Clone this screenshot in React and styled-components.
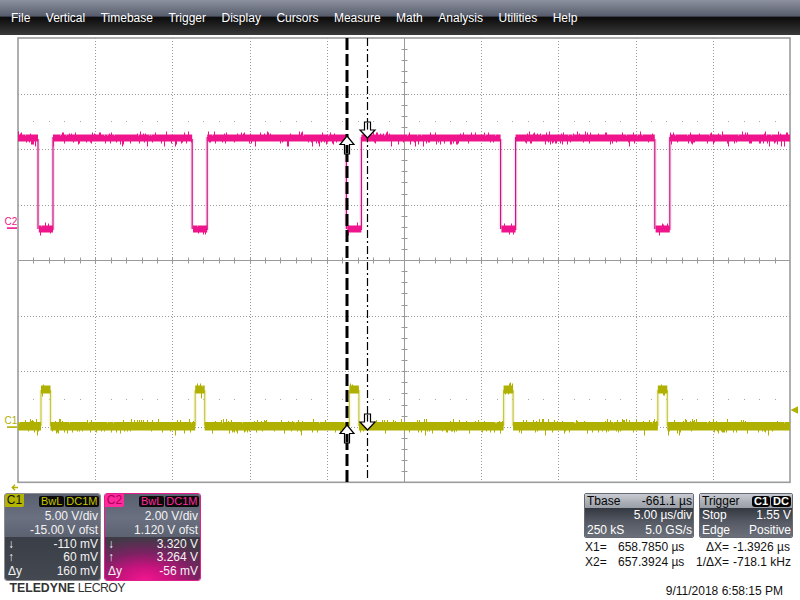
import React from "react";
import styled, { createGlobalStyle } from "styled-components";

const GlobalStyle = createGlobalStyle`
  html, body { margin: 0; padding: 0; background: #fff; }
  body { font-family: "Liberation Sans", Arial, sans-serif; }
  #root { width: 800px; height: 600px; overflow: hidden; }
`;

const PINK = "#f0148c";
const OLIVE = "#b0b000";

const Screen = styled.div`
  width: 800px;
  height: 600px;
  display: flex;
  flex-direction: column;
  background: #fff;
  overflow: hidden;
`;

const MenuBar = styled.nav`
  height: 35px;
  flex: none;
  box-sizing: border-box;
  display: flex;
  align-items: center;
  gap: 15.5px;
  padding: 1px 0 0 11px;
  background: linear-gradient(
    180deg,
    #8d919f 0%,
    #6a6f7e 30%,
    #575c6c 46%,
    #0c0c0c 49%,
    #161616 62%,
    #3a3a3a 100%
  );
`;

const MenuItem = styled.span`
  color: #fff;
  font-size: 12px;
  line-height: 14px;
`;

const Display = styled.svg`
  display: block;
  flex: none;
  width: 800px;
  height: 456px;
  font-family: "Liberation Sans", Arial, sans-serif;
`;

const Bottom = styled.div`
  flex: 1;
  display: flex;
  justify-content: space-between;
  padding: 2px 7px 0 4px;
`;

const LeftCol = styled.div`
  display: flex;
  flex-direction: column;
`;

const PanelRow = styled.div`
  display: flex;
  gap: ${(p) => p.$gap}px;
`;

const ChanPanel = styled.div`
  width: 97px;
  height: 88px;
  box-sizing: border-box;
  border: 1px solid ${(p) => p.$border};
  border-radius: 3px;
  overflow: hidden;
  display: flex;
  flex-direction: column;
  color: #f3f3f3;
  font-size: 12px;
`;

const PanelTop = styled.div`
  flex: none;
  background: linear-gradient(180deg, #596070 0%, #6a7080 55%, #5d6271 100%);
`;

const PanelHead = styled.div`
  height: 15px;
  display: flex;
  justify-content: space-between;
  align-items: flex-start;
`;

const ChanTag = styled.span`
  width: 19px;
  height: 13px;
  line-height: 13px;
  text-align: center;
  font-size: 12px;
  background: ${(p) => p.$bg};
  color: ${(p) => p.$fg};
  border-radius: 2px 0 2px 0;
`;

const Badges = styled.span`
  display: flex;
  gap: 1px;
  margin-top: 2px;
  margin-right: 1px;
`;

const Badge = styled.span`
  height: 11px;
  line-height: 11px;
  font-size: 11px;
  padding: 0 1.5px;
  background: #0b0b0b;
  color: ${(p) => p.$fg};
  border-radius: 2px;
`;

const ValueRow = styled.div`
  height: ${(p) => p.$h}px;
  line-height: ${(p) => p.$h}px;
  display: flex;
  justify-content: ${(p) => (p.$split ? "space-between" : "flex-end")};
  padding: 0 2px 0 3px;
  white-space: pre;
`;

const PanelLower = styled.div`
  flex: 1;
  padding-top: 1px;
  background: ${(p) => p.$bg};
`;

const Logo = styled.div`
  padding-left: 6px;
  height: 16px;
  line-height: 14px;
  font-size: 13.5px;
  color: #333;
  white-space: nowrap;
  transform: scaleX(0.91);
  transform-origin: left center;
`;

const LogoBold = styled.b`
  font-weight: 700;
`;

const LogoLight = styled.span`
  font-weight: 400;
  letter-spacing: -0.6px;
  margin-left: 3px;
`;

const RightCol = styled.div`
  width: 209px;
  display: flex;
  flex-direction: column;
`;

const InfoPanel = styled.div`
  width: ${(p) => p.$w}px;
  height: 45px;
  box-sizing: border-box;
  border: 1px solid #666a72;
  border-radius: 2px;
  overflow: hidden;
  display: flex;
  flex-direction: column;
  font-size: 12px;
`;

const InfoHead = styled.div`
  height: 14px;
  line-height: 14px;
  flex: none;
  display: flex;
  justify-content: space-between;
  align-items: center;
  padding: 0 1px 0 2px;
  color: #050505;
  background: linear-gradient(180deg, #c9ccd2 0%, #a9adb5 60%, #9a9ea6 100%);
`;

const InfoBody = styled.div`
  flex: 1;
  background: linear-gradient(180deg, #33373f 0%, #545862 45%, #6c707a 100%);
`;

const InfoRow = styled.div`
  height: 14.5px;
  line-height: 14.5px;
  display: flex;
  justify-content: ${(p) => (p.$split ? "space-between" : "flex-end")};
  padding: 0 1px 0 2px;
  color: #fff;
  white-space: pre;
`;

const TrigBadges = styled.span`
  display: flex;
  gap: 1px;
`;

const TrigBadge = styled.span`
  height: 11px;
  line-height: 11px;
  font-size: 11px;
  font-weight: 700;
  padding: 0 2px;
  color: #fff;
  background: #050505;
  border-radius: 3px;
`;

const Readouts = styled.div`
  margin-top: 2px;
  display: grid;
  grid-template-columns: 34px 77px 36px 1fr;
  font-size: 12px;
  line-height: 15px;
  color: #111;
  white-space: pre;
`;

const RLabel = styled.span`
  text-align: ${(p) => (p.$right ? "right" : "left")};
  padding: ${(p) => (p.$right ? "0 2px 0 0" : "0 0 0 1px")};
`;

const RValue = styled.span`
  padding-left: ${(p) => p.$pl || 0}px;
`;

const Stamp = styled.div`
  margin-top: 14px;
  padding-right: 10px;
  text-align: right;
  font-size: 12px;
  line-height: 15px;
  color: #111;
`;

/* ---------- drawing helpers ---------- */

const GX0 = 18;
const GX1 = 790;
const GY0 = 38;
const GY1 = 482.3;
const DX = (GX1 - GX0) / 10;
const DY = (GY1 - GY0) / 8;
const CX = GX0 + DX * 5;
const CY = GY0 + DY * 4;

const mkRand = (seed) => {
  let s = seed;
  return () => {
    s = (s * 16807) % 2147483647;
    return (s - 1) / 2147483646;
  };
};

function band(x1, x2, yt, yb, rand) {
  let d = `M${x1} ${yt}H${x2}V${yb}H${x1}Z`;
  let w = "";
  for (let x = Math.ceil(x1); x < x2 - 1; x += 1) {
    const r = rand();
    if (r < 0.14) {
      const l = 1 + Math.floor(rand() * 2.5);
      d += `M${x} ${yt}h1v${-l}h-1z`;
    } else if (r < 0.3) {
      const l = 1 + Math.floor(rand() * 2.5);
      d += `M${x} ${yb}h1v${l}h-1z`;
    } else if (r < 0.315) {
      d += `M${x} ${yb}h1v5h-1z`;
    } else if (r < 0.35) {
      w += `M${x} ${yt}h1v1.2h-1z`;
    }
  }
  return { d, w };
}

function buildC2() {
  const rand = mkRand(12345);
  const starts = [0, 1, 2, 3, 4].map((k) => 38 + k * 154.2);
  const W = 15;
  let d = "";
  let w = "";
  const add = (b) => {
    d += b.d;
    w += b.w;
  };
  let prev = GX0;
  starts.forEach((s) => {
    add(band(prev, s, 134.5, 141.5, rand));
    add(band(s + 0.8, s + W, 225.5, 232.5, rand));
    prev = s + W;
  });
  add(band(prev, GX1, 134.5, 141.5, rand));
  const edges = [];
  starts.forEach((s) => {
    edges.push({ x: s, y1: 139, y2: 229 });
    edges.push({ x: s + W, y1: 137, y2: 230 });
  });
  return { d, w, edges };
}

function buildC1() {
  const rand = mkRand(98765);
  const starts = [0, 1, 2, 3, 4].map((k) => 41 + k * 154.2);
  const W = 9.5;
  let d = "";
  let w = "";
  const add = (b) => {
    d += b.d;
    w += b.w;
  };
  let prev = GX0;
  starts.forEach((s) => {
    add(band(prev, s, 422, 430.5, rand));
    add(band(s, s + W, 385.5, 393.5, rand));
    prev = s + W;
  });
  add(band(prev, GX1, 422, 430.5, rand));
  const edges = [];
  starts.forEach((s) => {
    edges.push({ x: s, y1: 390, y2: 426 });
    edges.push({ x: s + W, y1: 390, y2: 426 });
  });
  return { d, w, edges };
}

const C2 = buildC2();
const C1 = buildC1();

function Grid() {
  const vx = [];
  for (let k = 1; k < 10; k++) if (k !== 5) vx.push(Math.round(GX0 + k * DX) + 0.5);
  const hy = [];
  for (let k = 1; k < 8; k++) if (k !== 4) hy.push(Math.round(GY0 + k * DY) + 0.5);
  const cx = Math.round(CX) + 0.5;
  const cy = Math.round(CY) + 0.5;
  let ticks = "";
  for (let i = 1; i < 50; i++) {
    const x = Math.round(GX0 + (i * DX) / 5) + 0.5;
    ticks += `M${x} ${cy - 3}V${cy + 3}`;
  }
  for (let i = 1; i < 40; i++) {
    const y = Math.round(GY0 + (i * DY) / 5) + 0.5;
    ticks += `M${cx - 3} ${y}H${cx + 3}`;
  }
  let dots = "";
  [GY0 + 1.5 * DY, GY0 + 6.5 * DY].forEach((y) => {
    const yy = Math.round(y);
    for (let i = 1; i < 50; i++) {
      if (i % 5 === 0) continue;
      const x = Math.round(GX0 + (i * DX) / 5);
      dots += `M${x} ${yy}h1v1h-1z`;
    }
  });
  return (
    <g>
      {vx.map((x) => (
        <line key={`v${x}`} x1={x} y1={GY0} x2={x} y2={GY1} stroke="#9a9a9a" strokeWidth="1" strokeDasharray="1 2" />
      ))}
      {hy.map((y) => (
        <line key={`h${y}`} x1={GX0} y1={y} x2={GX1} y2={y} stroke="#9a9a9a" strokeWidth="1" strokeDasharray="1 2" />
      ))}
      <path d={dots} fill="#a8a8a8" />
      <line x1={cx} y1={GY0} x2={cx} y2={GY1} stroke="#9a9a9a" strokeWidth="1" />
      <line x1={GX0} y1={cy} x2={GX1} y2={cy} stroke="#9a9a9a" strokeWidth="1" />
      <path d={ticks} stroke="#9a9a9a" strokeWidth="1" fill="none" />
      <rect x={GX0} y={GY0} width={GX1 - GX0} height={GY1 - GY0} fill="none" stroke="#9c9c9c" strokeWidth="1.6" />
    </g>
  );
}

function Trace({ data, color, edge, glow }) {
  return (
    <g>
      {data.edges.map((e, i) => (
        <line key={`g${i}`} x1={e.x} y1={e.y1} x2={e.x} y2={e.y2} stroke={glow} strokeWidth="4" opacity="0.3" />
      ))}
      {data.edges.map((e, i) => (
        <line key={`e${i}`} x1={e.x} y1={e.y1} x2={e.x} y2={e.y2} stroke={edge} strokeWidth="1.2" />
      ))}
      <path d={data.d} fill={color} />
      <path d={data.w} fill="#fff" opacity="0.5" />
    </g>
  );
}

function UpArrow({ x, y, line }) {
  const p = `${x},${y} ${x + 7},${y + 8.5} ${x + 2.5},${y + 8.5} ${x + 2.5},${y + 18} ${x - 2.5},${y + 18} ${x - 2.5},${y + 8.5} ${x - 7},${y + 8.5}`;
  return (
    <g>
      <polygon points={p} fill="#fff" stroke="#000" strokeWidth="1.2" strokeLinejoin="miter" />
      <rect x={x - line / 2} y={y + 9} width={line} height={8.4} fill="#000" />
    </g>
  );
}

function DownArrow({ x, y, line }) {
  const p = `${x},${y} ${x + 7.5},${y - 8} ${x + 3},${y - 8} ${x + 3},${y - 16} ${x - 3},${y - 16} ${x - 3},${y - 8} ${x - 7.5},${y - 8}`;
  return (
    <g>
      <polygon points={p} fill="#fff" stroke="#000" strokeWidth="1.2" />
      <rect x={x - line / 2} y={y - 15.4} width={line} height={7} fill="#000" />
    </g>
  );
}

function Scope() {
  const x1 = 347;
  const x2 = 367.5;
  return (
    <Display viewBox="0 35 800 456" xmlns="http://www.w3.org/2000/svg">
      <rect x="0" y="35" width="800" height="456" fill="#fff" />
      <Grid />
      <Trace data={C2} color={PINK} edge="#c4187e" glow="#f8a6d2" />
      <Trace data={C1} color={OLIVE} edge="#c4c44a" glow="#eeee9a" />

      <text x="4.5" y="224.5" fontSize="10" fill={PINK}>C2</text>
      <rect x="7" y="227.3" width="10" height="1.6" fill={PINK} />
      <text x="4.5" y="423.5" fontSize="10" fill={OLIVE}>C1</text>
      <rect x="7" y="426.3" width="10" height="1.6" fill={OLIVE} />

      <polygon points="790.5,410 798,406.3 798,413.7" fill={OLIVE} />
      <path d="M18 487.5H12.2M15 484.7L12.2 487.5L15 490.3" stroke={OLIVE} strokeWidth="1.3" fill="none" />

      <line x1={x1} y1={GY0} x2={x1} y2={GY1} stroke="#000" strokeWidth="3" strokeDasharray="12 4" />
      <line x1={x2} y1={GY0} x2={x2} y2={478} stroke="#000" strokeWidth="1.2" strokeDasharray="8 3 2 3" />

      <UpArrow x={x1} y={136} line={3} />
      <UpArrow x={x1} y={425} line={3} />
      <DownArrow x={x2} y={138} line={1.2} />
      <DownArrow x={x2} y={430} line={1.2} />
    </Display>
  );
}

function ChannelBox({ border, tagBg, tagFg, name, badgeFg, rows, lower, lowerBg }) {
  return (
    <ChanPanel $border={border}>
      <PanelTop>
        <PanelHead>
          <ChanTag $bg={tagBg} $fg={tagFg}>{name}</ChanTag>
          <Badges>
            <Badge $fg={badgeFg}>BwL</Badge>
            <Badge $fg={badgeFg}>DC1M</Badge>
          </Badges>
        </PanelHead>
        {rows.map((r) => (
          <ValueRow key={r} $h={14}>{r}</ValueRow>
        ))}
      </PanelTop>
      <PanelLower $bg={lowerBg}>
        {lower.map(([l, v]) => (
          <ValueRow key={l} $h={13.4} $split>
            <span>{l}</span>
            <span>{v}</span>
          </ValueRow>
        ))}
      </PanelLower>
    </ChanPanel>
  );
}

const menu = ["File", "Vertical", "Timebase", "Trigger", "Display", "Cursors", "Measure", "Math", "Analysis", "Utilities", "Help"];

export default function App() {
  return (
    <Screen>
      <GlobalStyle />
      <MenuBar>
        {menu.map((m) => (
          <MenuItem key={m}>{m}</MenuItem>
        ))}
      </MenuBar>
      <Scope />
      <Bottom>
        <LeftCol>
          <PanelRow $gap={3}>
            <ChannelBox
              border="#8a8c90"
              tagBg="#b4b400"
              tagFg="#111"
              name="C1"
              badgeFg="#c4c400"
              rows={["5.00 V/div", "-15.00 V ofst"]}
              lower={[["↓", "-110 mV"], ["↑", "60 mV"], ["Δy", "160 mV"]]}
              lowerBg="linear-gradient(180deg, #3a3e46 0%, #444850 100%)"
            />
            <ChannelBox
              border="#e2208c"
              tagBg="#ff2a9c"
              tagFg="#a8005a"
              name="C2"
              badgeFg="#ff2a9c"
              rows={["2.00 V/div", "1.120 V ofst"]}
              lower={[["↓", "3.320 V"], ["↑", "3.264 V"], ["Δy", "-56 mV"]]}
              lowerBg="radial-gradient(ellipse 95% 110% at 42% 100%, #f2168e 0%, #c8137e 28%, #7a2262 58%, #403a46 90%)"
            />
          </PanelRow>
          <Logo>
            <LogoBold>TELEDYNE</LogoBold>
            <LogoLight>LECROY</LogoLight>
          </Logo>
        </LeftCol>
        <RightCol>
          <PanelRow $gap={5}>
            <InfoPanel $w={110}>
              <InfoHead>
                <span>Tbase</span>
                <span>-661.1 µs</span>
              </InfoHead>
              <InfoBody>
                <InfoRow>5.00 µs/div</InfoRow>
                <InfoRow $split>
                  <span>250 kS</span>
                  <span>5.0 GS/s</span>
                </InfoRow>
              </InfoBody>
            </InfoPanel>
            <InfoPanel $w={94}>
              <InfoHead>
                <span>Trigger</span>
                <TrigBadges>
                  <TrigBadge>C1</TrigBadge>
                  <TrigBadge>DC</TrigBadge>
                </TrigBadges>
              </InfoHead>
              <InfoBody>
                <InfoRow $split>
                  <span>Stop</span>
                  <span>1.55 V</span>
                </InfoRow>
                <InfoRow $split>
                  <span>Edge</span>
                  <span>Positive</span>
                </InfoRow>
              </InfoBody>
            </InfoPanel>
          </PanelRow>
          <Readouts>
            <RLabel>X1=</RLabel>
            <RValue>658.7850 µs</RValue>
            <RLabel $right>ΔX=</RLabel>
            <RValue $pl={2}>-1.3926 µs</RValue>
            <RLabel>X2=</RLabel>
            <RValue>657.3924 µs</RValue>
            <RLabel $right>1/ΔX=</RLabel>
            <RValue $pl={2}>-718.1 kHz</RValue>
          </Readouts>
          <Stamp>9/11/2018 6:58:15 PM</Stamp>
        </RightCol>
      </Bottom>
    </Screen>
  );
}
